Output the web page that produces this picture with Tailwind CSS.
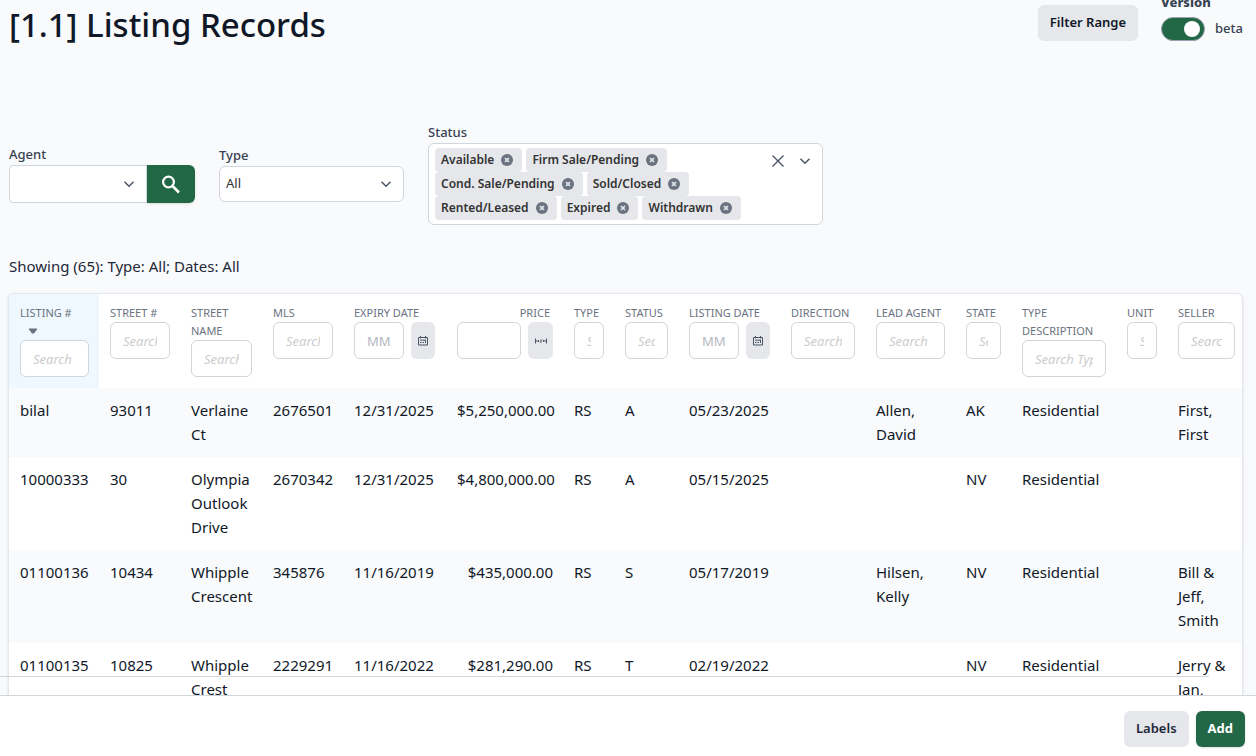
<!DOCTYPE html>
<html lang="en">
<head>
    <meta charset="UTF-8">
    <meta name="viewport" content="width=device-width, initial-scale=1.0">
    <title>Listing Records</title>
    <script src="https://cdn.jsdelivr.net/npm/@tailwindcss/browser@4"></script>
    <style>
        body {
            font-family: "Noto Sans", "Open Sans", sans-serif;
        }
        th {
            font-size: 11px;
            line-height: 18px;
            font-weight: 400;
            color: #6b7280;
            text-align: left;
            vertical-align: top;
            padding: 10px 10px 11px 11px;
            white-space: nowrap;
        }
        td {
            vertical-align: top;
            padding: 10px 10px 11px 11px;
        }
        th:last-child, td:last-child {
            padding-right: 7px;
        }
        th input {
            display: block;
            width: 100%;
            min-width: 0;
            height: 37px;
            padding: 0 12px;
            font-size: 13px;
            color: #374151;
            background: #fff;
            border: 1px solid #d1d5db;
            border-radius: 6px;
        }
        th input::placeholder {
            color: #ccc;
            font-style: italic;
        }
        th input.date::placeholder {
            color: #b3b8c0;
            font-style: normal;
        }
    </style>
</head>
<body class="bg-gray-50 text-gray-900 h-screen overflow-hidden flex flex-col">

    <!-- Icons used more than once -->
    <svg class="hidden">
        <symbol id="chevron" viewBox="0 0 12 12">
            <path d="M1.5 3.8 6 8.2l4.5-4.4" fill="none" stroke="currentColor" stroke-width="1.5"/>
        </symbol>
        <symbol id="remove" viewBox="0 0 12 12">
            <circle cx="6" cy="6" r="6" fill="#6b7280"/>
            <path d="M4 4l4 4M8 4 4 8" stroke="#e5e7eb" stroke-width="1.7"/>
        </symbol>
        <symbol id="calendar" viewBox="0 0 12 12">
            <path d="M1.5 2.5h9v7.5h-9z" fill="none" stroke="currentColor" stroke-width="1"/>
            <path d="M3.500 1v2.500M8.500 1v2.500M3 5.200h6M3 7.500h1.500M5.500 7.500H7M8.500 5v3" fill="none" stroke="currentColor" stroke-width="1"/>
        </symbol>
        <symbol id="range" viewBox="0 0 12 12">
            <path d="M.5 3.500v5M11.500 3.500v5M1 6h2.500M8.500 6h3M3.500 5v2M8.500 5v2" fill="none" stroke="currentColor" stroke-width="1"/>
            <path d="M4.800 7.500 7.200 4.500M5 5.200h2M5 7h2" fill="none" stroke="currentColor" stroke-width=".7"/>
        </symbol>
    </svg>

    <main class="relative flex-1 min-h-0 overflow-hidden pl-2 pr-[13px]">
        <header class="flex justify-between h-[122px]">
            <h1 class="pl-px text-[33px] leading-[50px] font-medium">[1.1] Listing Records</h1>
            <div class="flex items-start">
                <button class="mt-[5px] h-9 px-3 rounded-md bg-gray-200 text-[13px] font-semibold">Filter Range</button>
                <div class="ml-[23px] -mt-2 text-[13px] text-gray-700">
                    <div class="leading-[20px] font-extrabold">Version</div>
                    <label class="mt-[5px] flex items-center gap-[10px] font-medium">
                        <input type="checkbox" checked class="appearance-none flex items-center justify-end w-11 h-6 pr-1 rounded-full border border-gray-400 bg-[#236846] before:block before:size-4 before:rounded-full before:bg-white">
                        beta
                    </label>
                </div>
            </div>
        </header>

        <!-- Filters -->
        <div class="flex items-center gap-6 pl-px text-[13px]">
            <div class="w-[186px]">
                <label for="agent" class="block leading-[21px] font-medium text-gray-700">Agent</label>
                <div class="flex h-[38px]">
                    <div class="relative flex-1">
                        <select id="agent" class="appearance-none w-full h-full bg-white border border-gray-300 rounded-l">
                            <option></option>
                        </select>
                        <svg class="absolute right-3 top-[13px] size-3 text-gray-600 pointer-events-none"><use href="#chevron"/></svg>
                    </div>
                    <button aria-label="Search agent" class="w-12 flex items-center justify-center rounded-r-md bg-[#236846] text-white shadow-sm">
                        <svg class="size-5" viewBox="0 0 20 20" fill="none" stroke="currentColor" stroke-width="2.200">
                            <circle cx="7.500" cy="8" r="5.400"/>
                            <path d="m11.500 12 6.500 6.500" stroke-width="2.600"/>
                        </svg>
                    </button>
                </div>
            </div>
            <div class="w-[185px]">
                <label for="type" class="block leading-[21px] font-medium text-gray-700">Type</label>
                <div class="relative h-9">
                    <select id="type" class="appearance-none w-full h-full pl-1.5 bg-white border border-gray-300 rounded-md text-[#333]">
                        <option>All</option>
                    </select>
                    <svg class="absolute right-3 top-3 size-3 text-gray-600 pointer-events-none"><use href="#chevron"/></svg>
                </div>
            </div>
            <div class="w-[395px]">
                <div id="statusLabel" class="leading-[21px] font-medium text-gray-700">Status</div>
                <div role="group" aria-labelledby="statusLabel" class="flex items-start bg-white border border-gray-300 rounded-md pl-1.5 pr-[11px] py-1">
                    <ul class="flex-1 flex flex-wrap gap-x-1 text-[12px] leading-6 font-semibold text-[#333]">
                        <li class="flex items-center gap-[7px] pl-1.5 pr-[9px] rounded bg-gray-200">Available <button aria-label="Remove Available"><svg class="size-3"><use href="#remove"/></svg></button></li>
                        <li class="flex items-center gap-[7px] pl-1.5 pr-[9px] rounded bg-gray-200">Firm Sale/Pending <button aria-label="Remove Firm Sale/Pending"><svg class="size-3"><use href="#remove"/></svg></button></li>
                        <li class="flex items-center gap-[7px] pl-1.5 pr-[9px] rounded bg-gray-200">Cond. Sale/Pending <button aria-label="Remove Cond. Sale/Pending"><svg class="size-3"><use href="#remove"/></svg></button></li>
                        <li class="flex items-center gap-[7px] pl-1.5 pr-[9px] rounded bg-gray-200">Sold/Closed <button aria-label="Remove Sold/Closed"><svg class="size-3"><use href="#remove"/></svg></button></li>
                        <li class="flex items-center gap-[7px] pl-1.5 pr-[9px] rounded bg-gray-200">Rented/Leased <button aria-label="Remove Rented/Leased"><svg class="size-3"><use href="#remove"/></svg></button></li>
                        <li class="flex items-center gap-[7px] pl-1.5 pr-[9px] rounded bg-gray-200">Expired <button aria-label="Remove Expired"><svg class="size-3"><use href="#remove"/></svg></button></li>
                        <li class="flex items-center gap-[7px] pl-1.5 pr-[9px] rounded bg-gray-200">Withdrawn <button aria-label="Remove Withdrawn"><svg class="size-3"><use href="#remove"/></svg></button></li>
                    </ul>
                    <div class="flex items-center gap-[15px] h-[26px] text-gray-600">
                        <button aria-label="Clear all"><svg class="size-3" viewBox="0 0 12 12"><path d="M.5.5l11 11M11.500.5l-11 11" stroke="currentColor" stroke-width="1.400"/></svg></button>
                        <button aria-label="Open list"><svg class="size-3"><use href="#chevron"/></svg></button>
                    </div>
                </div>
            </div>
        </div>

        <p class="mt-[29px] mb-[15px] pl-px text-[15px] leading-6 text-gray-800">Showing (65): Type: All; Dates: All</p>

        <!-- Listings -->
        <div class="bg-white border border-gray-200 rounded-md shadow-sm overflow-hidden">
            <table class="table-fixed w-full text-[15px] leading-6">
                <colgroup>
                    <col class="w-[90px]">
                    <col class="w-[81px]">
                    <col class="w-[82px]">
                    <col class="w-[81px]">
                    <col class="w-[103px]">
                    <col class="w-[117px]">
                    <col class="w-[51px]">
                    <col class="w-[64px]">
                    <col class="w-[102px]">
                    <col class="w-[85px]">
                    <col class="w-[90px]">
                    <col class="w-[56px]">
                    <col class="w-[105px]">
                    <col class="w-[51px]">
                    <col class="w-[75px]">
                </colgroup>
                <thead>
                    <tr>
                        <th class="bg-[#eff8ff]">
                            LISTING #
                            <svg class="block ml-[9px] my-1.5 w-2 h-1.5" viewBox="0 0 8 6"><path d="M0 .5h8v1L5 5.500H3L0 1.500z" fill="#6b7280"/></svg>
                            <input type="text" placeholder="Search" aria-label="Listing #">
                        </th>
                        <th>STREET #<input type="text" placeholder="Search" aria-label="Street #"></th>
                        <th>STREET<br>NAME<input type="text" placeholder="Search" aria-label="Street name"></th>
                        <th>MLS<input type="text" placeholder="Search" aria-label="MLS"></th>
                        <th>
                            EXPIRY DATE
                            <div class="flex gap-[7px] pr-px">
                                <input type="text" class="date" placeholder="MM/DD/YYYY" aria-label="Expiry date">
                                <button aria-label="Pick expiry date range" class="shrink-0 w-6 h-[37px] flex items-center justify-center rounded-md bg-gray-200 text-gray-600"><svg class="size-3"><use href="#calendar"/></svg></button>
                            </div>
                        </th>
                        <th>
                            <div class="text-right pr-[3px]">PRICE</div>
                            <div class="flex gap-[7px]">
                                <input type="text" aria-label="Price">
                                <button aria-label="Pick price range" class="shrink-0 w-[25px] h-[37px] flex items-center justify-center rounded-md bg-gray-200 text-gray-600"><svg class="size-3"><use href="#range"/></svg></button>
                            </div>
                        </th>
                        <th>TYPE<input type="text" placeholder="Search" aria-label="Type"></th>
                        <th>STATUS<input type="text" placeholder="Search" aria-label="Status"></th>
                        <th>
                            LISTING DATE
                            <div class="flex gap-[7px]">
                                <input type="text" class="date" placeholder="MM/DD/YYYY" aria-label="Listing date">
                                <button aria-label="Pick listing date range" class="shrink-0 w-6 h-[37px] flex items-center justify-center rounded-md bg-gray-200 text-gray-600"><svg class="size-3"><use href="#calendar"/></svg></button>
                            </div>
                        </th>
                        <th>DIRECTION<input type="text" placeholder="Search" aria-label="Direction"></th>
                        <th>LEAD AGENT<input type="text" placeholder="Search" aria-label="Lead agent"></th>
                        <th>STATE<input type="text" placeholder="Search" aria-label="State"></th>
                        <th>TYPE<br>DESCRIPTION<input type="text" placeholder="Search Type" aria-label="Type description"></th>
                        <th>UNIT<input type="text" placeholder="Search" aria-label="Unit"></th>
                        <th>SELLER<input type="text" placeholder="Search" aria-label="Seller"></th>
                    </tr>
                </thead>
                <tbody>
                    <tr class="odd:bg-gray-50">
                        <td>bilal</td>
                        <td>93011</td>
                        <td>Verlaine Ct</td>
                        <td>2676501</td>
                        <td>12/31/2025</td>
                        <td class="text-right">$5,250,000.00</td>
                        <td>RS</td>
                        <td>A</td>
                        <td>05/23/2025</td>
                        <td></td>
                        <td>Allen, David</td>
                        <td>AK</td>
                        <td>Residential</td>
                        <td></td>
                        <td>First, First</td>
                    </tr>
                    <tr class="odd:bg-gray-50">
                        <td>10000333</td>
                        <td>30</td>
                        <td>Olympia Outlook Drive</td>
                        <td>2670342</td>
                        <td>12/31/2025</td>
                        <td class="text-right">$4,800,000.00</td>
                        <td>RS</td>
                        <td>A</td>
                        <td>05/15/2025</td>
                        <td></td>
                        <td></td>
                        <td>NV</td>
                        <td>Residential</td>
                        <td></td>
                        <td></td>
                    </tr>
                    <tr class="odd:bg-gray-50">
                        <td>01100136</td>
                        <td>10434</td>
                        <td>Whipple Crescent</td>
                        <td>345876</td>
                        <td>11/16/2019</td>
                        <td class="text-right">$435,000.00</td>
                        <td>RS</td>
                        <td>S</td>
                        <td>05/17/2019</td>
                        <td></td>
                        <td>Hilsen, Kelly</td>
                        <td>NV</td>
                        <td>Residential</td>
                        <td></td>
                        <td>Bill &amp; Jeff, Smith</td>
                    </tr>
                    <tr class="odd:bg-gray-50">
                        <td>01100135</td>
                        <td>10825</td>
                        <td>Whipple Crest</td>
                        <td>2229291</td>
                        <td>11/16/2022</td>
                        <td class="text-right">$281,290.00</td>
                        <td>RS</td>
                        <td>T</td>
                        <td>02/19/2022</td>
                        <td></td>
                        <td></td>
                        <td>NV</td>
                        <td>Residential</td>
                        <td></td>
                        <td>Jerry &amp; Jan,</td>
                    </tr>
                </tbody>
            </table>
        </div>

        <!-- Edge of the sticky scroll bar -->
        <div class="absolute left-0 right-[47px] bottom-[18px] border-t border-gray-300"></div>
    </main>

    <footer class="flex justify-end gap-[7px] bg-white border-t border-gray-300 pt-[15px] pb-[9px] pr-[11px] text-[13px]">
        <button class="h-9 px-3 rounded-md bg-gray-200 font-semibold text-gray-800">Labels</button>
        <button class="h-9 px-3 rounded-md bg-[#236846] font-bold text-white shadow-sm">Add</button>
    </footer>

</body>
</html>
